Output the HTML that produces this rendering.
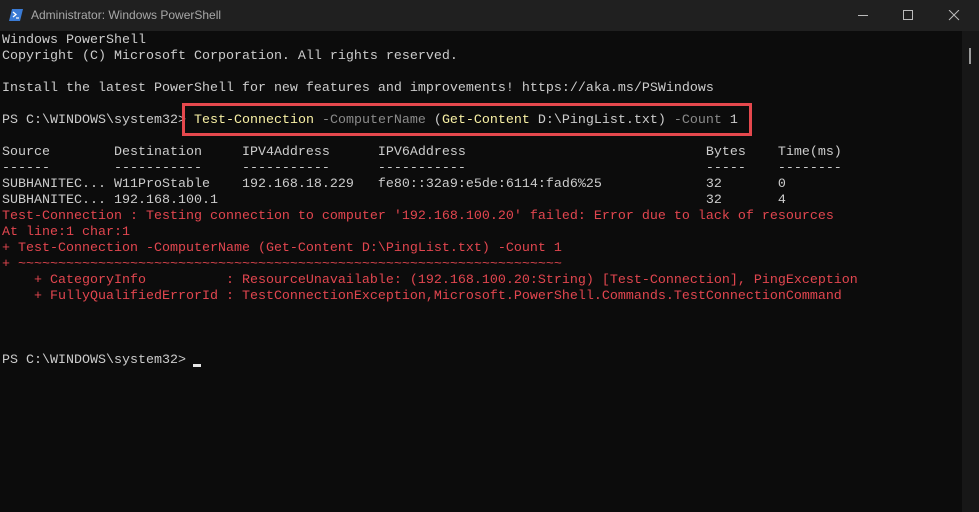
<!DOCTYPE html>
<html><head><meta charset="utf-8"><style>
html,body{margin:0;padding:0;width:979px;height:512px;overflow:hidden;background:#0c0c0c}
#title{position:absolute;left:0;top:0;width:979px;height:31px;background:#202020;}
#title .t{position:absolute;left:31px;top:8px;font:12px "Liberation Sans",sans-serif;color:#a8a8a8}
#term{position:absolute;left:2px;top:33px;margin:0;font-family:"Liberation Mono",monospace;font-size:13.33px;line-height:16px;color:#cccccc;white-space:pre}
.y{color:#f9f1a5}.g{color:#8a8a8a}.r{color:#e2464f}
#sb{position:absolute;left:962px;top:31px;width:17px;height:481px;background:#171717}
#thumb{position:absolute;left:969px;top:48px;width:2px;height:16px;background:#9a9a9a}
#box{position:absolute;left:182px;top:103px;width:564px;height:27px;border:3px solid #e5484d}
#cur{position:absolute;left:193px;top:364px;width:8px;height:3px;background:#e6e6e6}
</style></head><body>
<div id="title">
<svg style="position:absolute;left:9px;top:9px" width="14" height="12" viewBox="0 0 14 12"><path d="M3 0h11l-3 12H0z" fill="#3a7bd5"/><path d="M4 3l3 2.5L4 8" stroke="#fff" stroke-width="1.3" fill="none"/><path d="M7 9h3" stroke="#fff" stroke-width="1.2"/></svg>
<span class="t">Administrator: Windows PowerShell</span>
<svg style="position:absolute;left:858px;top:10px" width="110" height="12" viewBox="0 0 110 12"><path d="M0 5.5h10" stroke="#bbb" stroke-width="1"/><rect x="45.5" y="0.5" width="9" height="9" stroke="#bbb" fill="none"/><path d="M91 0l10 10M101 0l-10 10" stroke="#bbb" stroke-width="1"/></svg>
</div>
<div id="sb"></div><div id="thumb"></div>
<pre id="term">Windows PowerShell
Copyright (C) Microsoft Corporation. All rights reserved.

Install the latest PowerShell for new features and improvements! https://aka.ms/PSWindows

PS C:\WINDOWS\system32&gt; <span class="y">Test-Connection</span> <span class="g">-ComputerName</span> (<span class="y">Get-Content</span> D:\PingList.txt) <span class="g">-Count</span> 1

Source        Destination     IPV4Address      IPV6Address                              Bytes    Time(ms)
------        -----------     -----------      -----------                              -----    --------
SUBHANITEC... W11ProStable    192.168.18.229   fe80::32a9:e5de:6114:fad6%25             32       0
SUBHANITEC... 192.168.100.1                                                             32       4
<span class="r">Test-Connection : Testing connection to computer '192.168.100.20' failed: Error due to lack of resources
At line:1 char:1
+ Test-Connection -ComputerName (Get-Content D:\PingList.txt) -Count 1
+ ~~~~~~~~~~~~~~~~~~~~~~~~~~~~~~~~~~~~~~~~~~~~~~~~~~~~~~~~~~~~~~~~~~~~
    + CategoryInfo          : ResourceUnavailable: (192.168.100.20:String) [Test-Connection], PingException
    + FullyQualifiedErrorId : TestConnectionException,Microsoft.PowerShell.Commands.TestConnectionCommand</span>



PS C:\WINDOWS\system32&gt; </pre>
<div id="box"></div>
<div id="cur"></div>
</body></html>
